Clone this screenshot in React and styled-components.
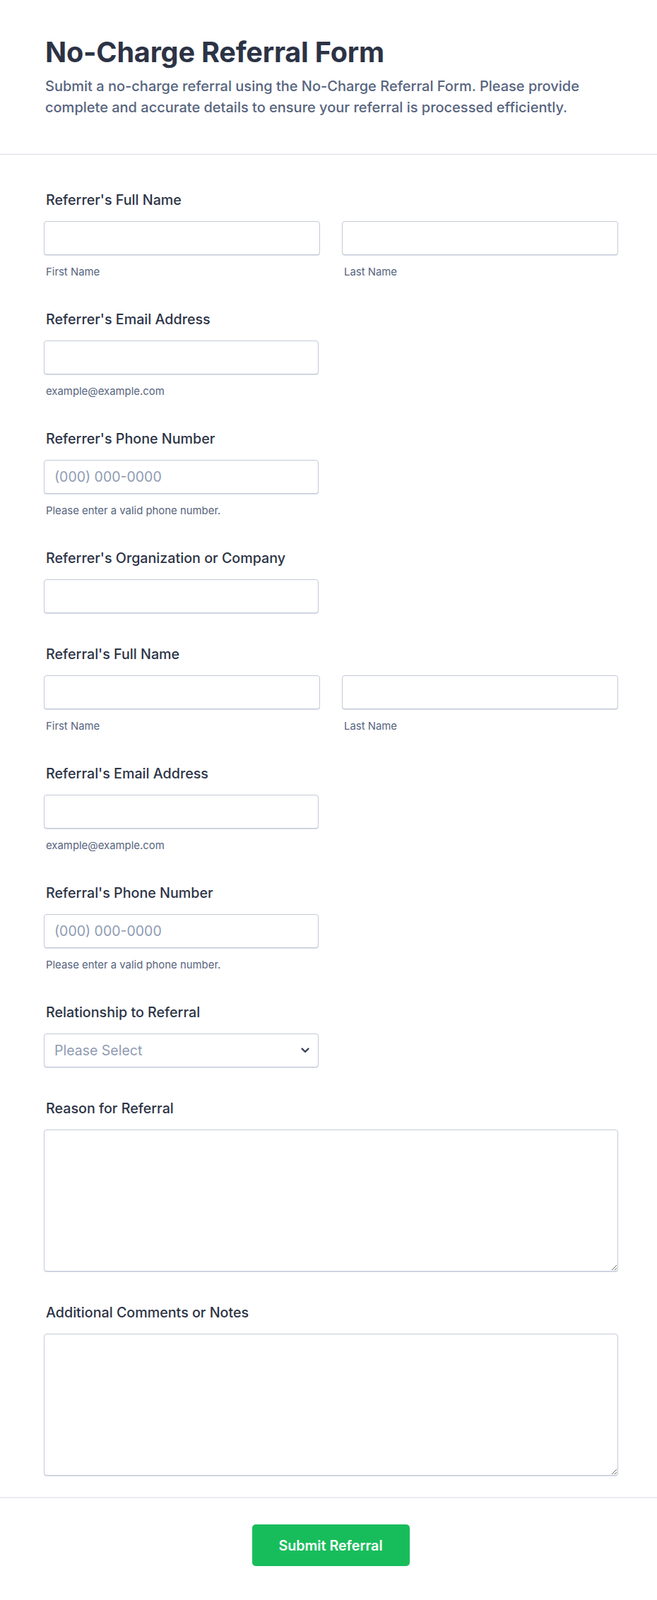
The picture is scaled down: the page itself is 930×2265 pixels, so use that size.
import React from 'react';
import styled, { createGlobalStyle } from 'styled-components';

const GlobalStyle = createGlobalStyle`
  * { box-sizing: border-box; }
  body {
    margin: 0;
    background: #fff;
    font-family: Inter, "Noto Sans", sans-serif;
    color: #2c3345;
  }
`;

const fields = [
  { label: "Referrer's Full Name", kind: 'name' },
  { label: "Referrer's Email Address", kind: 'text', sub: 'example@example.com' },
  { label: "Referrer's Phone Number", kind: 'text', placeholder: '(000) 000-0000', sub: 'Please enter a valid phone number.' },
  { label: "Referrer's Organization or Company", kind: 'text' },
  { label: "Referral's Full Name", kind: 'name' },
  { label: "Referral's Email Address", kind: 'text', sub: 'example@example.com' },
  { label: "Referral's Phone Number", kind: 'text', placeholder: '(000) 000-0000', sub: 'Please enter a valid phone number.' },
  { label: 'Relationship to Referral', kind: 'select' },
  { label: 'Reason for Referral', kind: 'area' },
  { label: 'Additional Comments or Notes', kind: 'area' },
];

function App() {
  return (
    <>
      <GlobalStyle />
      <Page>
        <Header>
          <Title>No-Charge Referral Form</Title>
          <Description>
            Submit a no-charge referral using the No-Charge Referral Form. Please provide
            complete and accurate details to ensure your referral is processed efficiently.
          </Description>
        </Header>

        <FieldList>
          {fields.map((f) => (
            <Field key={f.label}>
              <Label>{f.label}</Label>
              {f.kind === 'name' && (
                <NameRow>
                  <div>
                    <Input type="text" />
                    <SubLabel>First Name</SubLabel>
                  </div>
                  <div>
                    <Input type="text" />
                    <SubLabel>Last Name</SubLabel>
                  </div>
                </NameRow>
              )}
              {f.kind === 'text' && (
                <Half>
                  <Input type="text" placeholder={f.placeholder} />
                  {f.sub && <SubLabel>{f.sub}</SubLabel>}
                </Half>
              )}
              {f.kind === 'select' && (
                <SelectWrap>
                  <Select defaultValue="">
                    <option value="" disabled>Please Select</option>
                  </Select>
                  <Chevron viewBox="0 0 12 8" aria-hidden="true">
                    <path d="M1.6 1.6 L6 6 L10.4 1.6" fill="none" stroke="#3c4459" strokeWidth="2.4" strokeLinecap="round" strokeLinejoin="round" />
                  </Chevron>
                </SelectWrap>
              )}
              {f.kind === 'area' && <TextArea />}
            </Field>
          ))}
        </FieldList>

        <Footer>
          <SubmitButton type="button">Submit Referral</SubmitButton>
        </Footer>
      </Page>
    </>
  );
}

export default App;

const Page = styled.div`
  width: 930px;
  min-height: 2265px;
  background: #fff;
`;

const Header = styled.header`
  padding: 51px 55px 51px 62px;
  border-bottom: 1px solid #d9dce6;
`;

const Title = styled.h1`
  margin: 0 0 0 2px;
  font-size: 39.6px;
  line-height: 47px;
  font-weight: 700;
  color: #2c3345;
  letter-spacing: -0.2px;
`;

const Description = styled.p`
  margin: 9px 0 0 2px;
  font-size: 20px;
  line-height: 30px;
  font-weight: 500;
  color: #57647e;
`;

const FieldList = styled.ul`
  list-style: none;
  margin: 0;
  padding: 52px 55px 30px 62px;
  display: flex;
  flex-direction: column;
  gap: 46px;
`;

const Field = styled.li`
  display: flex;
  flex-direction: column;
`;

const Label = styled.label`
  display: block;
  padding-left: 3px;
  margin-bottom: 18px;
  font-size: 19.7px;
  line-height: 24px;
  font-weight: 500;
  color: #2c3345;
`;

const NameRow = styled.div`
  display: grid;
  grid-template-columns: 1fr 1fr;
  column-gap: 31px;
`;

const Half = styled.div`
  width: 389px;
`;

const Input = styled.input`
  display: block;
  width: 100%;
  height: 48px;
  padding: 0 14px;
  border: 1px solid #c3cad8;
  border-radius: 4px;
  box-shadow: 0 1px 0 rgba(195, 202, 216, 0.6);
  background: #fff;
  font-family: Inter, "Noto Sans", sans-serif;
  font-size: 19.5px;
  color: #2c3345;
  outline: none;

  &::placeholder {
    color: #8f9bb3;
  }
`;

const SubLabel = styled.div`
  margin-top: 15px;
  padding-left: 3px;
  font-size: 14.9px;
  line-height: 18px;
  color: #57647e;
`;

const SelectWrap = styled.div`
  position: relative;
  width: 389px;
`;

const Select = styled.select`
  appearance: none;
  display: block;
  width: 100%;
  height: 48px;
  padding: 0 40px 0 14px;
  border: 1px solid #c3cad8;
  border-radius: 4px;
  box-shadow: 0 1px 0 rgba(195, 202, 216, 0.6);
  background: #fff;
  font-family: Inter, "Noto Sans", sans-serif;
  font-size: 19.5px;
  color: #8f9bb3;
  outline: none;
`;

const Chevron = styled.svg`
  position: absolute;
  right: 13px;
  top: 50%;
  width: 12px;
  height: 8px;
  margin-top: -4px;
  pointer-events: none;
`;

const TextArea = styled.textarea`
  display: block;
  width: 100%;
  height: 201px;
  padding: 12px 14px;
  border: 1px solid #c3cad8;
  border-radius: 4px;
  box-shadow: 0 1px 0 rgba(195, 202, 216, 0.6);
  font-family: Inter, "Noto Sans", sans-serif;
  font-size: 17px;
  color: #2c3345;
  outline: none;
`;

const Footer = styled.div`
  border-top: 2px solid #ebedf3;
  padding: 37px 0 50px 6px;
  display: flex;
  justify-content: center;
`;

const SubmitButton = styled.button`
  width: 223px;
  height: 59px;
  border: none;
  border-radius: 5px;
  background: #18bd5b;
  color: #fff;
  font-family: Inter, "Noto Sans", sans-serif;
  font-size: 19.7px;
  font-weight: 600;
  cursor: pointer;
`;
